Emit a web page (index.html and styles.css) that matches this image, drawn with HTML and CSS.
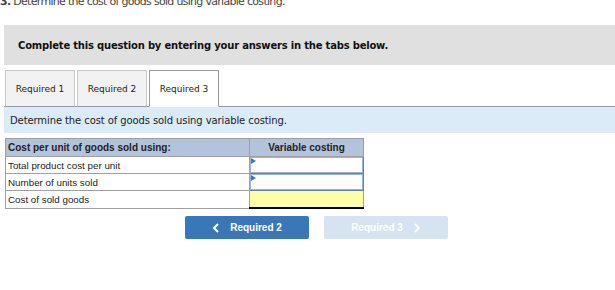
FILE: index.html
```html
<!DOCTYPE html>
<html lang="en">
<head>
    <meta charset="UTF-8">
    <title>Variable costing</title>
    <link rel="stylesheet" href="styles.css">
</head>
<body>
    <p class="question"><b>3.</b> Determine the cost of goods sold using variable costing.</p>
    <div class="instructions">Complete this question by entering your answers in the tabs below.</div>
    <div class="tabs">
        <div class="tab">Required 1</div>
        <div class="tab">Required 2</div>
        <div class="tab active">Required 3</div>
    </div>
    <div class="task">Determine the cost of goods sold using variable costing.</div>
    <table class="answer">
        <tr>
            <th class="label">Cost per unit of goods sold using:</th>
            <th class="value">Variable costing</th>
        </tr>
        <tr>
            <td class="label">Total product cost per unit</td>
            <td class="input"><span class="flag"></span></td>
        </tr>
        <tr>
            <td class="label">Number of units sold</td>
            <td class="input"><span class="flag"></span></td>
        </tr>
        <tr>
            <td class="label">Cost of sold goods</td>
            <td class="total"></td>
        </tr>
    </table>
    <div class="nav">
        <button class="nav-btn">
            <svg width="8" height="10" viewBox="0 0 8 10"><path d="M6 1 L2 5 L6 9" fill="none" stroke="#fff" stroke-width="2"/></svg>
            Required 2
        </button>
        <button class="nav-btn disabled">
            Required 3
            <svg width="8" height="10" viewBox="0 0 8 10"><path d="M2 1 L6 5 L2 9" fill="none" stroke="#fff" stroke-width="2"/></svg>
        </button>
    </div>
</body>
</html>
```
FILE: styles.css
```css
body {
    margin: 0;
    font-family: "DejaVu Sans", Verdana, sans-serif;
    color: #222;
    background: #fff;
}
.question {
    margin: -5px 0 0 0;
    font-size: 11px;
    line-height: 14px;
    letter-spacing: -0.7px;
    color: #444;
}
.instructions {
    margin: 16px 0 0 4px;
    height: 40px;
    padding-left: 14px;
    display: flex;
    align-items: center;
    background-color: #e0e0e0;
    font-size: 10px;
    letter-spacing: -0.2px;
    font-weight: bold;
    color: #111;
}
.tabs {
    display: flex;
    gap: 2px;
    margin: 5px 0 0 4px;
    padding-left: 1px;
    border-bottom: 1px solid #999;
}
.tab {
    width: 68px;
    height: 35px;
    margin-bottom: -1px;
    display: flex;
    align-items: center;
    justify-content: center;
    background-color: #f2f2f2;
    border: 1px solid #c8c8c8;
    border-bottom-color: #999;
    font-size: 9px;
    color: #222;
}
.tab.active {
    background-color: #fff;
    border-color: #999;
    border-bottom-color: #fff;
}
.task {
    margin-left: 4px;
    height: 26px;
    padding-left: 6px;
    display: flex;
    align-items: center;
    background-color: #dbebf8;
    font-size: 10px;
    letter-spacing: -0.1px;
    color: #222;
}
.answer {
    margin: 5px 0 0 5px;
    border-collapse: collapse;
    font-family: "Liberation Sans", Arial, sans-serif;
    font-size: 9.8px;
}
.answer th, .answer td {
    border: 1px solid #a0a0a0;
    height: 16px;
    padding: 0 2px;
}
.answer th {
    background-color: #b4c3dc;
    font-size: 10px;
    color: #222;
    height: 17px;
}
.answer th.label {
    text-align: left;
}
.answer .label {
    width: 239px;
}
.answer .value,
.answer .input,
.answer .total {
    width: 109px;
}
.answer td.input {
    position: relative;
    border: 1px solid #5b7fae;
    box-shadow: inset 0 0 0 1px #9db4d6;
}
.flag {
    position: absolute;
    top: 1px;
    left: 1px;
    width: 0;
    height: 0;
    border-top: 3px solid transparent;
    border-bottom: 3px solid transparent;
    border-left: 5px solid #3d78c4;
}
.answer td.total {
    background-color: #ffffa8;
    border-bottom: 2px solid #000;
}
.nav {
    display: flex;
    gap: 15px;
    margin-top: 7px;
    padding-left: 185px;
}
.nav-btn {
    width: 124px;
    height: 23px;
    display: flex;
    align-items: center;
    justify-content: center;
    gap: 10px;
    border: none;
    border-radius: 2px;
    background-color: #3a77b9;
    color: #fff;
    font-family: "Liberation Sans", Arial, sans-serif;
    font-size: 10px;
    font-weight: bold;
}
.nav-btn.disabled {
    background-color: #d6e3f1;
}
```
